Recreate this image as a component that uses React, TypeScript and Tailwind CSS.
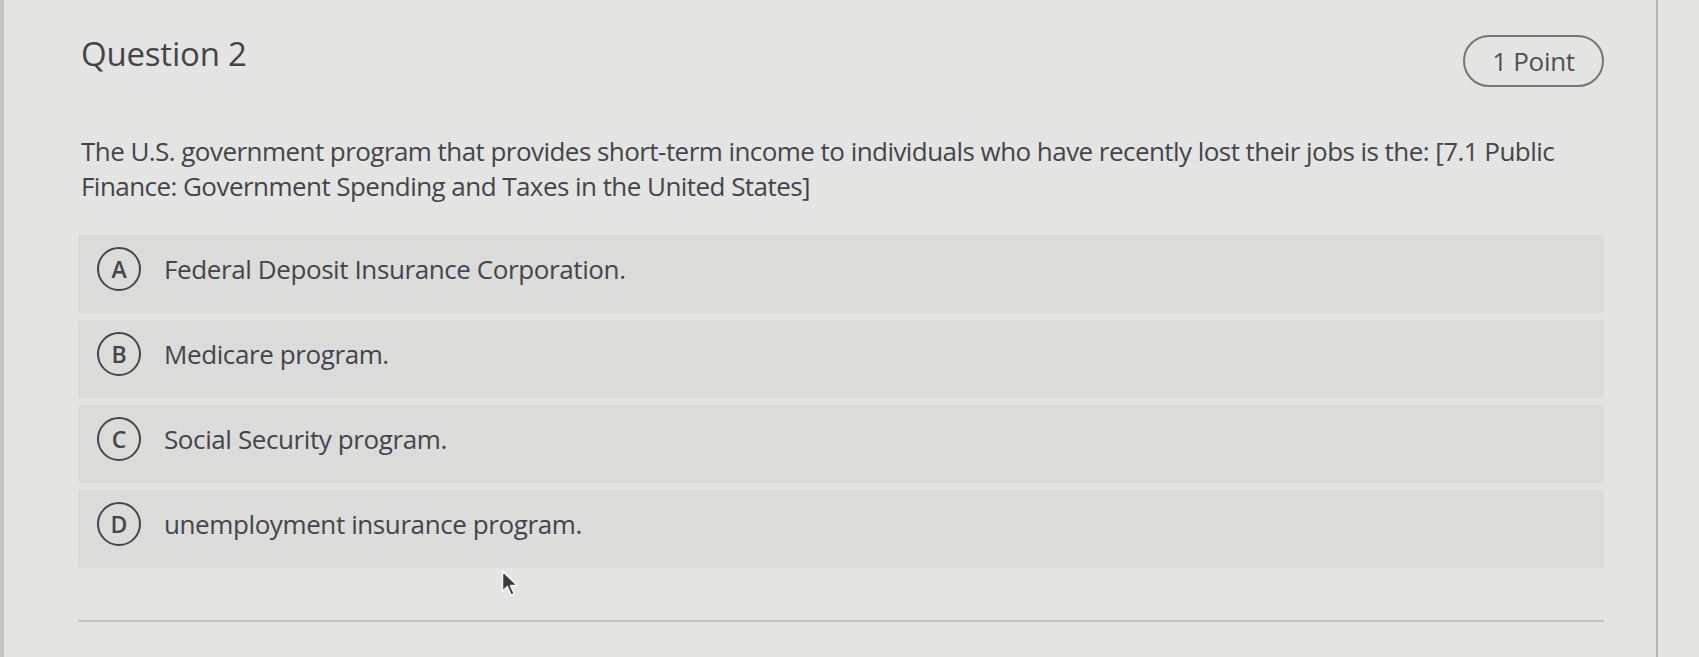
import React from "react";

const options = [
  { letter: "A", text: "Federal Deposit Insurance Corporation." },
  { letter: "B", text: "Medicare program." },
  { letter: "C", text: "Social Security program." },
  { letter: "D", text: "unemployment insurance program." },
];

export default function App() {
  return (
    <div className="relative w-[1699px] h-[657px] overflow-hidden bg-[#e4e4e2] font-['Open_Sans',sans-serif] text-[#44444c]">
      <div className="absolute left-0 top-0 h-full w-[4px] bg-[#c4c4c4]" />
      <div className="absolute left-[1656px] top-0 h-full w-[2px] bg-[#b5b5b5]" />

      <div className="flex flex-col pl-[78px] w-[1604px]">
        <div className="flex items-start justify-between pt-[35px]">
          <h1 className="pl-[3px] text-[33px] leading-[38px] font-medium tracking-[-0.2px] text-[#44444a]">Question 2</h1>
          <div className="flex h-[52px] w-[141px] items-center justify-center rounded-full border-2 border-[#76767a] text-[26px] font-medium tracking-[-0.3px] text-[#505056]">
            1 Point
          </div>
        </div>

        <p className="mt-[47px] pl-[3px] text-[26px] leading-[35px] font-medium tracking-[-0.55px]">
          The U.S. government program that provides short-term income to individuals who have recently lost their jobs is the: [7.1 Public Finance: Government Spending and Taxes in the United States]
        </p>

        <div className="mt-[31px] flex flex-col gap-[7px]">
          {options.map((o) => (
            <div key={o.letter} className="flex h-[78px] items-center gap-[23px] rounded-[2px] bg-[#dbdbd9] pl-[19px] pb-[10px]">
              <div className="flex h-[44px] w-[44px] items-center justify-center rounded-full border-[2.5px] border-[#45454c] text-[23px] font-semibold leading-none text-[#45454c]">
                {o.letter}
              </div>
              <span className="text-[26px] leading-[35px] font-medium tracking-[-0.4px]">{o.text}</span>
            </div>
          ))}
        </div>

        <div className="mt-[52px] h-[2px] w-full bg-[#c2c2c2]" />
      </div>

      <svg className="absolute left-[500px] top-[570px]" width="20" height="28" viewBox="0 0 18 26">
        <path d="M2 1 L2 20 L6.5 15.5 L10 23.5 L13 22 L9.5 14.5 L16 14.5 Z" fill="#3a3a40" stroke="#f4f4f4" strokeWidth="1.5" strokeLinejoin="round" />
      </svg>
    </div>
  );
}
